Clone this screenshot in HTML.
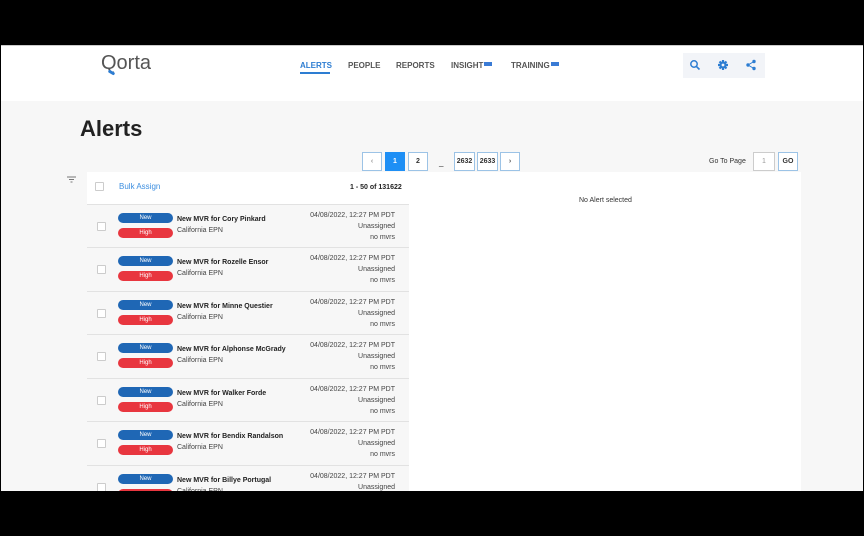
<!DOCTYPE html>
<html><head><style>
*{box-sizing:border-box;margin:0;padding:0}
body{width:864px;height:536px;background:#000;position:relative;overflow:hidden;font-family:"Liberation Sans",sans-serif}
.app{position:absolute;left:1px;top:45px;width:862px;height:446px;background:#f7f7f7;border-top:1px solid #ccc;overflow:hidden}
.hdr{position:absolute;left:0;top:0;width:862px;height:55px;background:#fff}
.abs{position:absolute}
.nav{font-size:8px;font-weight:bold;color:#555;top:15px}
.tag{display:inline-block;width:8px;height:4px;background:#3a7bd5;vertical-align:top;margin-left:1px;margin-top:1px}
.pg{position:absolute;top:106px;height:19px;border:1px solid #9cc3e6;background:#fff;font-size:7px;font-weight:bold;text-align:center;line-height:17px;color:#333}
.row{position:absolute;left:86px;width:322px;height:43px;border-top:1px solid #e2e2e2;background:#f7f7f7}
.cb{position:absolute;width:9px;height:9px;border:1px solid #ccc;background:#fff;border-radius:1px}
.bd{position:absolute;left:31px;width:55px;height:10px;border-radius:5px;color:#fff;font-size:6px;text-align:center;line-height:10px}
.nm{position:absolute;left:90px;top:11px;font-size:7px;font-weight:bold;color:#222}
.sb{position:absolute;left:90px;top:22px;font-size:7px;color:#444}
.rt{position:absolute;right:14px;font-size:7px;color:#444;text-align:right}
</style></head><body>
<div class="app">
<div class="hdr">
<div class="abs" style="left:100px;top:6px;font-size:20px;color:#555;letter-spacing:0px">Qorta</div>
<div class="abs" style="left:107px;top:25px;width:7px;height:3px;background:#2d7dd2;border-radius:2px;transform:rotate(30deg)"></div>
<div class="abs nav" style="left:299px;color:#2d7dd2">ALERTS</div>
<div class="abs" style="left:299px;top:26px;width:30px;height:2px;background:#2d7dd2"></div>
<div class="abs nav" style="left:347px">PEOPLE</div>
<div class="abs nav" style="left:395px">REPORTS</div>
<div class="abs nav" style="left:450px">INSIGHT<span class="tag"></span></div>
<div class="abs nav" style="left:510px">TRAINING<span class="tag"></span></div>
<div class="abs" style="left:682px;top:7px;width:82px;height:25px;background:#f2f4f8"></div>
<svg class="abs" style="left:688px;top:13px" width="12" height="12" viewBox="0 0 12 12"><circle cx="5" cy="5" r="3.2" fill="none" stroke="#2d7dd2" stroke-width="1.5"/><path d="M7.4 7.4L10.5 10.5" stroke="#2d7dd2" stroke-width="1.6"/></svg>
<svg class="abs" style="left:716px;top:13px" width="12" height="12" viewBox="0 0 12 12"><g stroke="#2d7dd2" stroke-width="2.2"><path d="M6 1V11M1 6H11M2.5 2.5L9.5 9.5M9.5 2.5L2.5 9.5"/></g><circle cx="6" cy="6" r="3.6" fill="#2d7dd2"/><circle cx="6" cy="6" r="1.4" fill="#f2f4f8"/></svg>
<svg class="abs" style="left:744px;top:13px" width="12" height="12" viewBox="0 0 12 12"><circle cx="9" cy="2.5" r="1.7" fill="#2d7dd2"/><circle cx="3" cy="6" r="1.7" fill="#2d7dd2"/><circle cx="9" cy="9.5" r="1.7" fill="#2d7dd2"/><path d="M9 2.5L3 6L9 9.5" stroke="#2d7dd2" stroke-width="1" fill="none"/></svg>
</div>
<div class="abs" style="left:79px;top:70px;font-size:22px;font-weight:bold;color:#222">Alerts</div>
<div class="pg" style="left:361px;width:20px;color:#999">&lsaquo;</div>
<div class="pg" style="left:384px;width:20px;background:#1e8ff5;border-color:#1e8ff5;color:#fff">1</div>
<div class="pg" style="left:407px;width:20px">2</div>
<div class="abs" style="left:438px;top:112px;font-size:8px;color:#333">_</div>
<div class="pg" style="left:453px;width:21px">2632</div>
<div class="pg" style="left:476px;width:21px">2633</div>
<div class="pg" style="left:499px;width:20px;color:#555">&rsaquo;</div>
<div class="abs" style="left:708px;top:112px;font-size:7px;color:#333">Go To Page</div>
<div class="pg" style="left:752px;width:22px;border-color:#ccc;font-weight:normal;color:#999">1</div>
<div class="pg" style="left:777px;width:20px">GO</div>
<svg class="abs" style="left:66px;top:130px" width="9" height="7"><path d="M0 1H9M2 3.5H7M3.5 6H5.5" stroke="#777" stroke-width="1"/></svg>
<div class="abs" style="left:86px;top:126px;width:322px;height:33px;background:#fff"></div>
<div class="abs" style="left:408px;top:126px;width:392px;height:330px;background:#fff"></div>
<div class="cb" style="left:94px;top:136px"></div>
<div class="abs" style="left:118px;top:136px;font-size:8px;color:#3d8fe0">Bulk Assign</div>
<div class="abs" style="left:349px;top:138px;font-size:7px;font-weight:bold;color:#222">1 - 50 of 131622</div>
<div class="abs" style="left:578px;top:151px;font-size:7px;color:#333">No Alert selected</div>

<div class="row" style="top:158px"><div class="cb" style="left:10px;top:17px"></div><div class="bd" style="top:8px;background:#1f67b5">New</div><div class="bd" style="top:23px;background:#e8363f">High</div><div class="nm">New MVR for Cory Pinkard</div><div class="sb">California EPN</div><div class="rt" style="top:7px">04/08/2022, 12:27 PM PDT</div><div class="rt" style="top:18px">Unassigned</div><div class="rt" style="top:29px">no mvrs</div></div>
<div class="row" style="top:201px"><div class="cb" style="left:10px;top:17px"></div><div class="bd" style="top:8px;background:#1f67b5">New</div><div class="bd" style="top:23px;background:#e8363f">High</div><div class="nm">New MVR for Rozelle Ensor</div><div class="sb">California EPN</div><div class="rt" style="top:7px">04/08/2022, 12:27 PM PDT</div><div class="rt" style="top:18px">Unassigned</div><div class="rt" style="top:29px">no mvrs</div></div>
<div class="row" style="top:245px"><div class="cb" style="left:10px;top:17px"></div><div class="bd" style="top:8px;background:#1f67b5">New</div><div class="bd" style="top:23px;background:#e8363f">High</div><div class="nm">New MVR for Minne Questier</div><div class="sb">California EPN</div><div class="rt" style="top:7px">04/08/2022, 12:27 PM PDT</div><div class="rt" style="top:18px">Unassigned</div><div class="rt" style="top:29px">no mvrs</div></div>
<div class="row" style="top:288px"><div class="cb" style="left:10px;top:17px"></div><div class="bd" style="top:8px;background:#1f67b5">New</div><div class="bd" style="top:23px;background:#e8363f">High</div><div class="nm">New MVR for Alphonse McGrady</div><div class="sb">California EPN</div><div class="rt" style="top:7px">04/08/2022, 12:27 PM PDT</div><div class="rt" style="top:18px">Unassigned</div><div class="rt" style="top:29px">no mvrs</div></div>
<div class="row" style="top:332px"><div class="cb" style="left:10px;top:17px"></div><div class="bd" style="top:8px;background:#1f67b5">New</div><div class="bd" style="top:23px;background:#e8363f">High</div><div class="nm">New MVR for Walker Forde</div><div class="sb">California EPN</div><div class="rt" style="top:7px">04/08/2022, 12:27 PM PDT</div><div class="rt" style="top:18px">Unassigned</div><div class="rt" style="top:29px">no mvrs</div></div>
<div class="row" style="top:375px"><div class="cb" style="left:10px;top:17px"></div><div class="bd" style="top:8px;background:#1f67b5">New</div><div class="bd" style="top:23px;background:#e8363f">High</div><div class="nm">New MVR for Bendix Randalson</div><div class="sb">California EPN</div><div class="rt" style="top:7px">04/08/2022, 12:27 PM PDT</div><div class="rt" style="top:18px">Unassigned</div><div class="rt" style="top:29px">no mvrs</div></div>
<div class="row" style="top:419px"><div class="cb" style="left:10px;top:17px"></div><div class="bd" style="top:8px;background:#1f67b5">New</div><div class="bd" style="top:23px;background:#e8363f">High</div><div class="nm">New MVR for Billye Portugal</div><div class="sb">California EPN</div><div class="rt" style="top:7px">04/08/2022, 12:27 PM PDT</div><div class="rt" style="top:18px">Unassigned</div><div class="rt" style="top:29px">no mvrs</div></div>
</div>
</body></html>
